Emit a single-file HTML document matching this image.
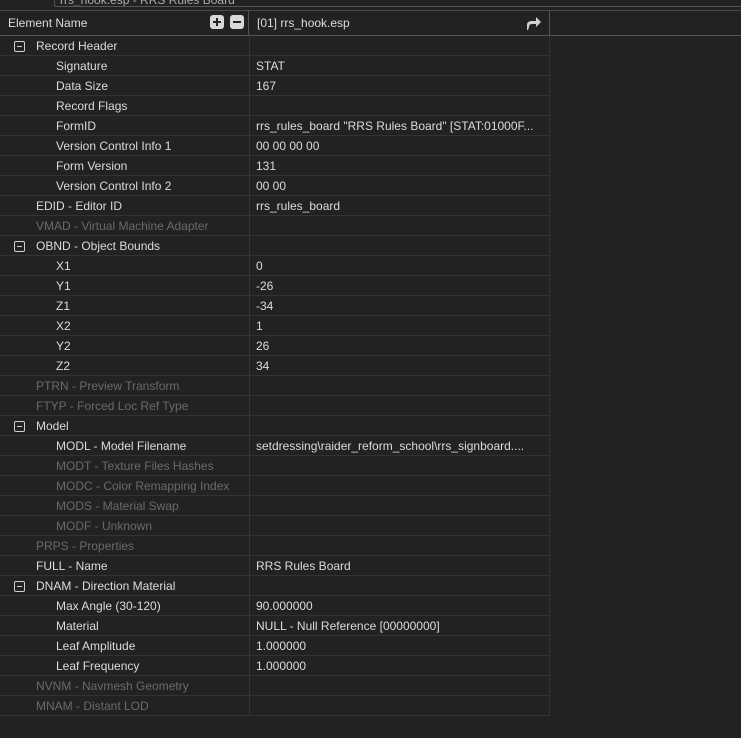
<!DOCTYPE html>
<html><head><meta charset="utf-8"><style>
*{margin:0;padding:0;box-sizing:border-box}
body{width:741px;height:738px;background:#222222;font-family:"Liberation Sans",sans-serif;font-size:12px;color:#dcdcdc;position:relative;overflow:hidden}
.top{position:absolute;left:54px;top:-6px;width:700px;height:13px;border:1px solid #555;border-radius:2px;color:#aaa;font-size:12px;line-height:10px;padding-left:5px;overflow:hidden}
.tl{position:absolute;left:0;top:10px;width:741px;height:1px;background:#4a4a4a}
.hdr{position:absolute;top:11px;left:0;width:741px;height:25px;border-bottom:1px solid #555}
.hdr .c1{position:absolute;left:0;top:0;width:249px;height:24px;border-right:1px solid #555;line-height:25px;padding-left:8px}
.hdr .c2{position:absolute;left:250px;top:0;width:300px;height:24px;border-right:1px solid #555;line-height:25px;padding-left:7px}
.btn{position:absolute;top:4px;width:14px;height:14px;background:#d8d8d8;border-radius:3px}
.btn:before{content:"";position:absolute;left:3px;top:6px;width:8px;height:2px;background:#222}
.btn.p:after{content:"";position:absolute;left:6px;top:3px;width:2px;height:8px;background:#222}
.row{position:absolute;left:0;width:550px;height:20px;border-bottom:1px solid #333}
.row .a{position:absolute;left:0;top:0;width:250px;height:19px;border-right:1px solid #333;line-height:21px;white-space:nowrap}
.row .b{position:absolute;left:256px;top:0;width:290px;line-height:21px;white-space:nowrap;overflow:hidden}
.d{color:#6a6a6a}
.l0{padding-left:36px}.l1{padding-left:56px}
.ex{position:absolute;left:14px;top:5px;width:11px;height:11px;border:1px solid #cfcfcf;border-radius:2px}
.ex:after{content:"";position:absolute;left:2px;top:4px;width:5px;height:1px;background:#cfcfcf}
</style></head><body>
<div class="top">rrs_hook.esp - RRS Rules Board</div>
<div class="tl"></div>
<div class="hdr">
 <div class="c1">Element Name<div class="btn p" style="left:210px"></div><div class="btn" style="left:230px"></div></div>
 <div class="c2">[01] rrs_hook.esp
  <svg style="position:absolute;left:276px;top:5px" width="16" height="15" viewBox="0 0 16 15"><path d="M1 14 L1 9 Q1 5 6 5 L10 5 L10 1 L15 6 L10 11 L10 8 L6 8 Q3 8 3 11 L2 14 Z" fill="#d0d0d0"/></svg>
 </div>
</div>
<div class="row" style="top:36px"><div class="a l0"><span class="ex"></span>Record Header</div><div class="b"></div></div>
<div class="row" style="top:56px"><div class="a l1">Signature</div><div class="b">STAT</div></div>
<div class="row" style="top:76px"><div class="a l1">Data Size</div><div class="b">167</div></div>
<div class="row" style="top:96px"><div class="a l1">Record Flags</div><div class="b"></div></div>
<div class="row" style="top:116px"><div class="a l1">FormID</div><div class="b">rrs_rules_board "RRS Rules Board" [STAT:01000F...</div></div>
<div class="row" style="top:136px"><div class="a l1">Version Control Info 1</div><div class="b">00 00 00 00</div></div>
<div class="row" style="top:156px"><div class="a l1">Form Version</div><div class="b">131</div></div>
<div class="row" style="top:176px"><div class="a l1">Version Control Info 2</div><div class="b">00 00</div></div>
<div class="row" style="top:196px"><div class="a l0">EDID - Editor ID</div><div class="b">rrs_rules_board</div></div>
<div class="row" style="top:216px"><div class="a l0 d">VMAD - Virtual Machine Adapter</div><div class="b"></div></div>
<div class="row" style="top:236px"><div class="a l0"><span class="ex"></span>OBND - Object Bounds</div><div class="b"></div></div>
<div class="row" style="top:256px"><div class="a l1">X1</div><div class="b">0</div></div>
<div class="row" style="top:276px"><div class="a l1">Y1</div><div class="b">-26</div></div>
<div class="row" style="top:296px"><div class="a l1">Z1</div><div class="b">-34</div></div>
<div class="row" style="top:316px"><div class="a l1">X2</div><div class="b">1</div></div>
<div class="row" style="top:336px"><div class="a l1">Y2</div><div class="b">26</div></div>
<div class="row" style="top:356px"><div class="a l1">Z2</div><div class="b">34</div></div>
<div class="row" style="top:376px"><div class="a l0 d">PTRN - Preview Transform</div><div class="b"></div></div>
<div class="row" style="top:396px"><div class="a l0 d">FTYP - Forced Loc Ref Type</div><div class="b"></div></div>
<div class="row" style="top:416px"><div class="a l0"><span class="ex"></span>Model</div><div class="b"></div></div>
<div class="row" style="top:436px"><div class="a l1">MODL - Model Filename</div><div class="b">setdressing\raider_reform_school\rrs_signboard....</div></div>
<div class="row" style="top:456px"><div class="a l1 d">MODT - Texture Files Hashes</div><div class="b"></div></div>
<div class="row" style="top:476px"><div class="a l1 d">MODC - Color Remapping Index</div><div class="b"></div></div>
<div class="row" style="top:496px"><div class="a l1 d">MODS - Material Swap</div><div class="b"></div></div>
<div class="row" style="top:516px"><div class="a l1 d">MODF - Unknown</div><div class="b"></div></div>
<div class="row" style="top:536px"><div class="a l0 d">PRPS - Properties</div><div class="b"></div></div>
<div class="row" style="top:556px"><div class="a l0">FULL - Name</div><div class="b">RRS Rules Board</div></div>
<div class="row" style="top:576px"><div class="a l0"><span class="ex"></span>DNAM - Direction Material</div><div class="b"></div></div>
<div class="row" style="top:596px"><div class="a l1">Max Angle (30-120)</div><div class="b">90.000000</div></div>
<div class="row" style="top:616px"><div class="a l1">Material</div><div class="b">NULL - Null Reference [00000000]</div></div>
<div class="row" style="top:636px"><div class="a l1">Leaf Amplitude</div><div class="b">1.000000</div></div>
<div class="row" style="top:656px"><div class="a l1">Leaf Frequency</div><div class="b">1.000000</div></div>
<div class="row" style="top:676px"><div class="a l0 d">NVNM - Navmesh Geometry</div><div class="b"></div></div>
<div class="row" style="top:696px"><div class="a l0 d">MNAM - Distant LOD</div><div class="b"></div></div>
<div style="position:absolute;left:549px;top:36px;width:1px;height:680px;background:#333"></div>
</body></html>
